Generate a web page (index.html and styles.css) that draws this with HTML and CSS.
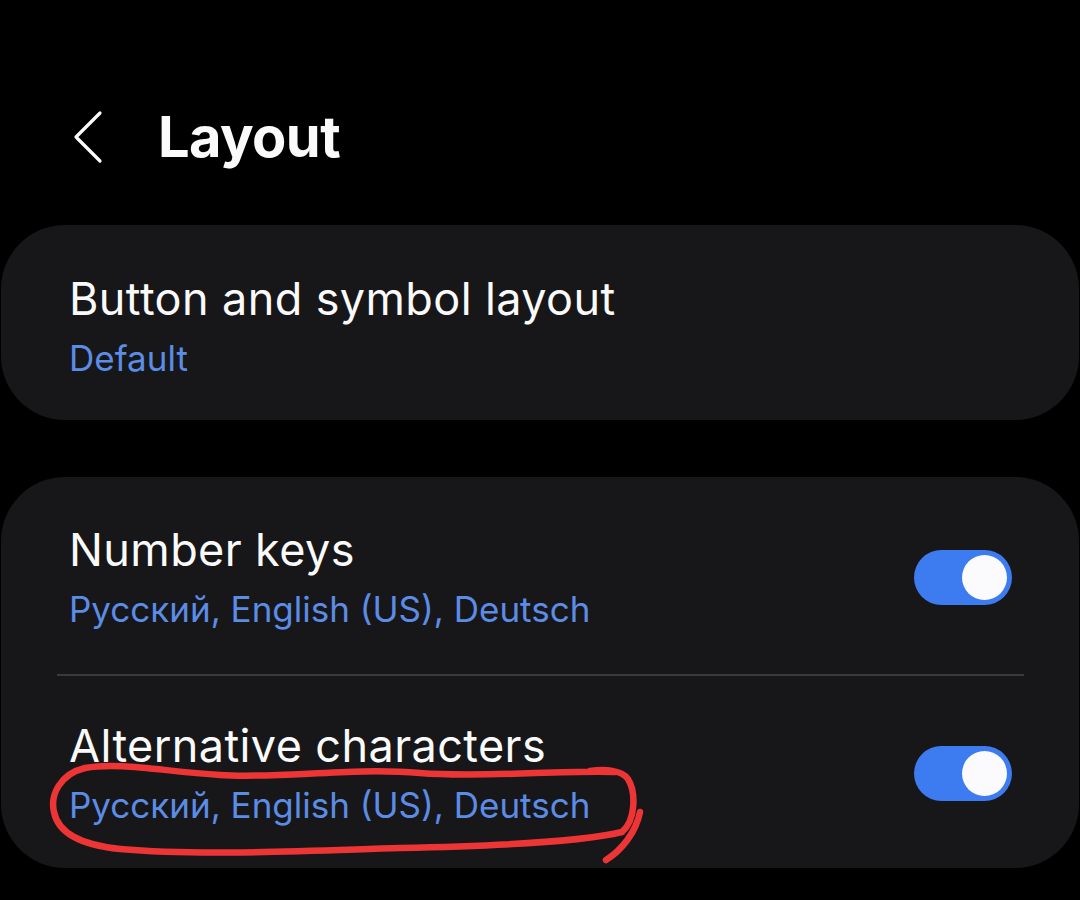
FILE: index.html
```html
<!DOCTYPE html>
<html lang="en">
<head>
<meta charset="utf-8">
<title>Layout</title>
<link rel="stylesheet" href="styles.css">
</head>
<body>
<div class="screen">
  <header class="header">
    <svg class="back" width="34" height="56" viewBox="0 0 34 56" aria-hidden="true">
      <path d="M28 4 L4 28 L28 52" fill="none" stroke="#ffffff" stroke-width="3.2" stroke-linecap="round" stroke-linejoin="round"/>
    </svg>
    <h1 class="title">Layout</h1>
  </header>

  <section class="card card-single">
    <div class="row-text">
      <div class="row-title">Button and symbol layout</div>
      <div class="row-sub">Default</div>
    </div>
  </section>

  <section class="card card-list">
    <div class="row row-first">
      <div class="row-text">
        <div class="row-title">Number keys</div>
        <div class="row-sub">Русский, English (US), Deutsch</div>
      </div>
      <div class="switch"><span class="knob"></span></div>
    </div>
    <div class="divider"></div>
    <div class="row row-last">
      <div class="row-text">
        <div class="row-title">Alternative characters</div>
        <div class="row-sub">Русский, English (US), Deutsch</div>
      </div>
      <div class="switch"><span class="knob"></span></div>
    </div>
  </section>

  <svg class="scribble" width="1080" height="900" viewBox="0 0 1080 900" aria-hidden="true">
    <path d="M615 772 C560 770 480 778 420 773 C350 767 280 779 220 775 C160 771 120 762 85 768 C60 774 50 795 54 812 C58 832 80 845 120 849 C200 856 300 851 400 848 C500 846 580 842 622 832 C636 820 636 792 628 779 C622 770 605 769 590 771"
          fill="none" stroke="#ee3535" stroke-width="6.5" stroke-linecap="round" stroke-linejoin="round"/>
    <path d="M640 812 C636 832 622 850 606 860" fill="none" stroke="#ee3535" stroke-width="6.5" stroke-linecap="round"/>
  </svg>
</div>
</body>
</html>
```

FILE: styles.css
```css
html, body {
  margin: 0;
  padding: 0;
  background: #000000;
}

body {
  font-family: Inter, Roboto, "Noto Sans", "Liberation Sans", sans-serif;
  color: #fafafa;
}

.screen {
  position: relative;
  width: 1080px;
  height: 900px;
  overflow: hidden;
  background: #000000;
}

.header {
  display: flex;
  align-items: center;
  padding: 102px 0 0 72px;
  height: 70px;
  margin-bottom: 53px;
}

.back {
  display: block;
  margin-right: 52px;
}

.title {
  margin: 0;
  font-size: 56px;
  line-height: 70px;
  font-weight: 700;
  color: #fafafa;
  letter-spacing: -0.6px;
}

.card {
  background: #171719;
  border-radius: 64px;
  margin: 0 1px;
}

.card-single {
  padding: 42px 68px 35px;
  margin-bottom: 57px;
}

.row {
  display: flex;
  align-items: center;
  justify-content: space-between;
  padding: 0 67px 0 68px;
}

.row-first {
  padding-top: 41px;
  padding-bottom: 38px;
}

.row-last {
  padding-top: 38px;
  padding-bottom: 36px;
}

.row-title {
  font-size: 45px;
  line-height: 64px;
  letter-spacing: 0.4px;
  color: #fafafa;
}

.row-sub {
  font-size: 35px;
  line-height: 54px;
  color: #5b8ce6;
}

.divider {
  height: 2px;
  background: #3a3a3c;
  margin: 0 55px 0 56px;
}

.switch {
  position: relative;
  width: 98px;
  height: 55px;
  border-radius: 28px;
  background: #3d7cf0;
  flex: none;
}

.knob {
  position: absolute;
  top: 5px;
  right: 5px;
  width: 45px;
  height: 45px;
  border-radius: 50%;
  background: #fbfbfd;
}

.scribble {
  position: absolute;
  left: 0;
  top: 0;
  pointer-events: none;
}
```
